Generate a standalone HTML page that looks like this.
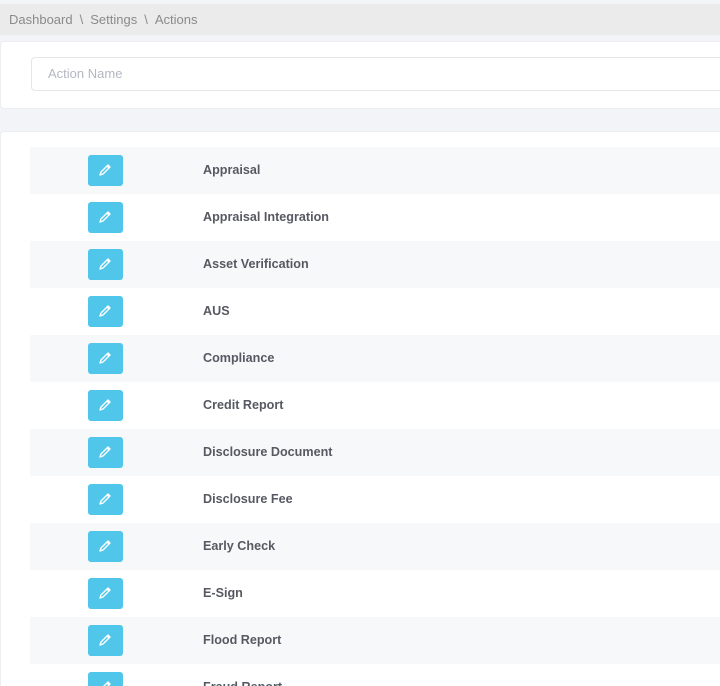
<!DOCTYPE html>
<html><head><style>
html,body{margin:0;height:686px;overflow:hidden}
body{background:#f3f4f7;font-family:"Liberation Sans",sans-serif;width:720px;position:relative}
.bc{position:absolute;top:4px;left:0;width:720px;height:31px;background:#ebebeb;color:#8a8a8a;font-size:13px;line-height:31px;padding-left:9px;box-sizing:border-box}
.bc span{margin:0 7px}
.c1{position:absolute;top:41px;left:0;width:730px;height:68px;background:#fff;border-radius:4px;border:1px solid #eceef2;box-sizing:border-box}
.inp{position:absolute;top:15px;left:30px;width:700px;height:34px;border:1px solid #e6e7eb;border-radius:4px;box-sizing:border-box;color:#b5b8c2;font-size:13px;line-height:32px;padding-left:16px}
.c2{position:absolute;top:131px;left:0;width:730px;height:555px;background:#fff;border-radius:4px 4px 0 0;border:1px solid #eceef2;border-bottom:0;box-sizing:border-box}
.row{position:absolute;left:30px;width:700px;height:47px}
.row.s{background:#f7f8fa}
.btn{position:absolute;left:58px;top:8px;width:35px;height:31px;background:#4fc6ea;border-radius:3px}
.btn svg{position:absolute;left:10px;top:8px}
.t{position:absolute;left:173px;top:0;line-height:47px;font-size:12.6px;font-weight:bold;color:#575962}
</style></head><body>
<div class="bc">Dashboard<span>\</span>Settings<span>\</span>Actions</div>
<div class="c1"><div class="inp">Action Name</div></div>
<div class="c2"></div>
<div id="rows"></div>
<script>
var n=["Appraisal","Appraisal Integration","Asset Verification","AUS","Compliance","Credit Report","Disclosure Document","Disclosure Fee","Early Check","E-Sign","Flood Report","Fraud Report"];
var h="";
n.forEach(function(x,i){h+='<div class="row'+(i%2==0?' s':'')+'" style="top:'+(147+i*47)+'px"><div class="btn"><svg width="14" height="14" viewBox="0 0 14 14"><path d="M10 2l2 2-7 7-3 1 1-3z M9 3l2 2" fill="none" stroke="#fff" stroke-width="1.4" stroke-linejoin="round"/></svg></div><div class="t">'+x+'</div></div>';});
document.getElementById("rows").innerHTML=h;
</script>
</body></html>
